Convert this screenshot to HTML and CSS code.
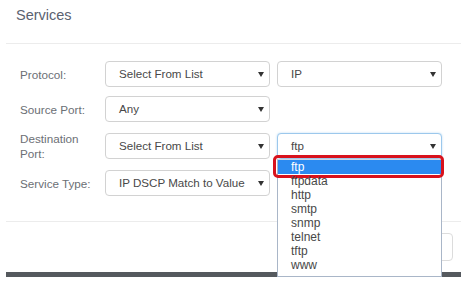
FILE: index.html
```html
<!DOCTYPE html>
<html>
<head>
<meta charset="utf-8">
<link rel="stylesheet" href="styles.css">
</head>
<body>
<div class="panel">
  <div class="header"><h2 class="title">Services</h2></div>
  <div class="form">
    <div class="row">
      <div class="lbl">Protocol:</div>
      <div class="sel">Select From List<span class="arrow"></span></div>
      <div class="sel">IP<span class="arrow"></span></div>
    </div>
    <div class="row">
      <div class="lbl">Source Port:</div>
      <div class="sel">Any<span class="arrow"></span></div>
    </div>
    <div class="row">
      <div class="lbl lbl-two">Destination<br>Port:</div>
      <div class="sel">Select From List<span class="arrow"></span></div>
      <div class="sel-wrap">
        <div class="sel focus">ftp<span class="arrow"></span></div>
        <ul class="dropdown">
          <li class="opt active">ftp<span class="callout"></span></li>
          <li class="opt">ftpdata</li>
          <li class="opt">http</li>
          <li class="opt">smtp</li>
          <li class="opt">snmp</li>
          <li class="opt">telnet</li>
          <li class="opt">tftp</li>
          <li class="opt">www</li>
        </ul>
      </div>
    </div>
    <div class="row">
      <div class="lbl">Service Type:</div>
      <div class="sel">IP DSCP Match to Value<span class="arrow"></span></div>
    </div>
  </div>
  <div class="footer">
    <button class="btn">Cancel</button>
  </div>
  <div class="bar"></div>
</div>
</body>
</html>
```
FILE: styles.css
```css
* { box-sizing: border-box; }
html, body { margin: 0; padding: 0; background: #fff; }
body {
  width: 474px;
  height: 289px;
  overflow: hidden;
  font-family: "Liberation Sans", Arial, sans-serif;
}
.panel {
  margin-left: 6px;
  width: 455px;
}
.header {
  height: 44px;
  border-bottom: 1px solid #ececec;
  padding-left: 10px;
  display: flex;
  align-items: flex-start;
}
.title {
  margin: 6px 0 0 0;
  font-size: 14.5px;
  font-weight: normal;
  color: #5b6270;
  line-height: 18px;
}
.form {
  padding: 17px 0 25px 14px;
  display: flex;
  flex-direction: column;
  gap: 9px;
}
.row {
  display: flex;
  align-items: center;
  gap: 7px;
}
.lbl {
  width: 78px;
  font-size: 11.7px;
  color: #6c6f75;
  line-height: 15px;
}
.sel-wrap { position: relative; }
.sel {
  position: relative;
  width: 165px;
  height: 26px;
  border: 1px solid #d2d2d2;
  border-radius: 4px;
  padding-left: 13px;
  font-size: 11.6px;
  line-height: 24px;
  color: #484848;
  background: #fff;
}
.sel.focus {
  border-color: #9cc8ec;
  box-shadow: 0 0 2px rgba(102, 175, 233, 0.5);
}
.arrow {
  position: absolute;
  right: 5px;
  top: 10px;
  width: 0;
  height: 0;
  border-left: 3px solid transparent;
  border-right: 3px solid transparent;
  border-top: 5px solid #333;
}
.dropdown {
  position: absolute;
  z-index: 5;
  top: 26px;
  left: 0;
  width: 165px;
  margin: 0;
  padding: 0 0 4px 0;
  list-style: none;
  background: #fff;
  border: 1px solid #a9b6c8;
  border-top: 1px solid #c9d6e6;
}
.opt {
  position: relative;
  height: 14px;
  line-height: 14px;
  padding-left: 13px;
  font-size: 12px;
  color: #484848;
}
.opt.active {
  background: #2b8af0;
  color: #fff;
}
.callout {
  position: absolute;
  top: -5px;
  bottom: -4px;
  left: -5px;
  right: -3px;
  border: 3px solid #d8121c;
  border-radius: 5px;
}
.footer {
  border-top: 1px solid #ececec;
  padding: 11px 8px 11px 0;
  display: flex;
  justify-content: flex-end;
}
.btn {
  width: 76px;
  height: 28px;
  border: 1px solid #dcdcdc;
  border-radius: 4px;
  background: #fff;
  font-family: "Liberation Sans", Arial, sans-serif;
  font-size: 12px;
  color: #444;
}
.bar {
  height: 5px;
  background: #55595e;
}
```
